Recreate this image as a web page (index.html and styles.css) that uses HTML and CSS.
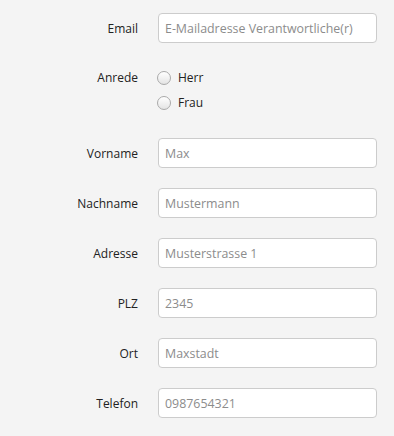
FILE: index.html
```html
<!DOCTYPE html>
<html lang="de">
<head>
  <meta charset="UTF-8">
  <meta name="viewport" content="width=device-width, initial-scale=1.0">
  <title>Verantwortliche(r)</title>
  <link rel="stylesheet" href="styles.css">
</head>
<body>
  <form class="contact-form">
    <div class="form-row">
      <label for="email">Email</label>
      <input type="email" id="email" placeholder="E-Mailadresse Verantwortliche(r)">
    </div>
    <div class="form-row radio-row">
      <span class="row-label">Anrede</span>
      <div class="radio-group">
        <label class="radio"><input type="radio" name="anrede" value="herr"><span class="radio-dot"></span>Herr</label>
        <label class="radio"><input type="radio" name="anrede" value="frau"><span class="radio-dot"></span>Frau</label>
      </div>
    </div>
    <div class="form-row">
      <label for="vorname">Vorname</label>
      <input type="text" id="vorname" placeholder="Max">
    </div>
    <div class="form-row">
      <label for="nachname">Nachname</label>
      <input type="text" id="nachname" placeholder="Mustermann">
    </div>
    <div class="form-row">
      <label for="adresse">Adresse</label>
      <input type="text" id="adresse" placeholder="Musterstrasse 1">
    </div>
    <div class="form-row">
      <label for="plz">PLZ</label>
      <input type="text" id="plz" placeholder="2345">
    </div>
    <div class="form-row">
      <label for="ort">Ort</label>
      <input type="text" id="ort" placeholder="Maxstadt">
    </div>
    <div class="form-row">
      <label for="telefon">Telefon</label>
      <input type="tel" id="telefon" placeholder="0987654321">
    </div>
  </form>
</body>
</html>
```

FILE: styles.css
```css
body {
  font-family: "Open Sans", "Liberation Sans", sans-serif;
  font-size: 12px;
  margin: 0;
  background-color: #f4f4f4;
  color: #222;
}
.contact-form {
  padding: 13px 0 0 8px;
}
.form-row {
  display: flex;
  align-items: center;
  margin-bottom: 20px;
}
.form-row > label,
.row-label {
  width: 150px;
  padding-right: 20px;
  box-sizing: border-box;
  text-align: right;
}
.form-row > input {
  width: 219px;
  height: 30px;
  box-sizing: border-box;
  border: 1px solid #ccc;
  border-radius: 4px;
  padding: 0 6px;
  background-color: #fff;
  font-family: inherit;
  font-size: 12.4px;
  color: #555;
  outline: none;
}
.form-row > input::placeholder {
  color: #8c8c8c;
}
.radio-row {
  align-items: flex-start;
  padding: 2px 0 3px;
}
.radio-row .row-label {
  line-height: 25px;
}
.radio-group {
  display: flex;
  flex-direction: column;
}
.radio {
  display: flex;
  align-items: center;
  height: 25px;
  margin-left: -1px;
}
.radio input {
  display: none;
}
.radio-dot {
  width: 14px;
  height: 14px;
  box-sizing: border-box;
  border: 1px solid #aaa;
  border-radius: 50%;
  background: linear-gradient(#fff, #e4e4e4);
  margin-right: 7px;
}
```
